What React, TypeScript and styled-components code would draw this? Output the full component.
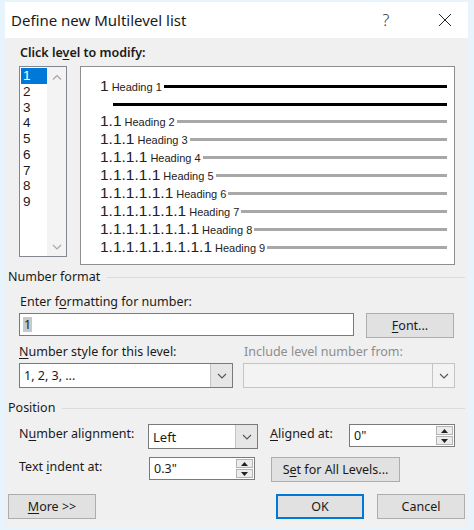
import React from "react";
import styled, { createGlobalStyle } from "styled-components";

const GlobalStyle = createGlobalStyle`
  html, body {
    margin: 0;
    padding: 0;
  }
  body {
    background: #e8f4fb;
    font-family: "Noto Sans", "Open Sans", sans-serif;
    color: #1a1a1a;
  }
`;

const Frame = styled.div`
  width: 474px;
  height: 530px;
  box-sizing: border-box;
  padding: 2px 6px 3px 5px;
  background: #e8f4fb;
  display: flex;
  flex-direction: column;
`;

const Window = styled.div`
  flex: 1;
  display: flex;
  flex-direction: column;
  background: #f0f0f0;
`;

const TitleBar = styled.div`
  height: 36px;
  background: #fff;
  display: flex;
  align-items: center;
  padding-left: 6px;
  font-size: 15px;
`;

const Title = styled.span`
  flex: 1;
`;

const HelpMark = styled.span`
  width: 20px;
  text-align: center;
  font-size: 16px;
  font-weight: 300;
  color: #333;
  margin-right: 38px;
`;

const CloseBox = styled.span`
  width: 22px;
  display: flex;
  justify-content: center;
  margin-right: 12px;
`;

const Body = styled.div`
  flex: 1;
  padding: 0 13px 0 3px;
  font-size: 12.5px;
`;

const Label = styled.div<{ $top: number; $disabled?: boolean; $bold?: boolean }>`
  margin-top: ${(p) => p.$top}px;
  padding-left: 12px;
  line-height: 16px;
  height: 16px;
  white-space: nowrap;
  font-weight: ${(p) => (p.$bold ? 600 : 400)};
  color: ${(p) => (p.$disabled ? "#8d8d8d" : "#1a1a1a")};
`;

const Key = styled.span`
  text-decoration: underline;
  text-underline-offset: 2px;
`;

const LevelRow = styled.div`
  margin-top: 5px;
  padding-left: 11px;
  display: flex;
  align-items: flex-start;
  gap: 13px;
`;

const ListBox = styled.div`
  width: 48px;
  height: 191px;
  box-sizing: border-box;
  border: 1px solid #828790;
  background: #fff;
  display: flex;
`;

const ListItems = styled.div`
  width: 26px;
  padding: 1px 0 0 1px;
  display: flex;
  flex-direction: column;
`;

const ListItem = styled.div<{ $selected?: boolean }>`
  height: 15.75px;
  line-height: 15.75px;
  font-family: "Liberation Sans", Arial, sans-serif;
  font-size: 13.5px;
  padding-left: 2px;
  color: ${(p) => (p.$selected ? "#fff" : "#1a1a1a")};
  background: ${(p) => (p.$selected ? "#0078d7" : "transparent")};
`;

const ScrollTrack = styled.div`
  flex: 1;
  background: #f3f3f3;
  display: flex;
  flex-direction: column;
  justify-content: space-between;
  align-items: center;
  padding: 7px 0 6px;
`;

const Preview = styled.div`
  width: 375px;
  height: 199px;
  box-sizing: border-box;
  border: 1px solid #8e8e8e;
  background: #fff;
  padding: 10px 7px 0 19px;
  font-family: "Liberation Sans", Arial, sans-serif;
`;

const PreviewRow = styled.div`
  height: 18px;
  display: flex;
  align-items: center;
  white-space: nowrap;
`;

const ContinueRow = styled.div`
  height: 17px;
  display: flex;
  align-items: center;
  padding-left: 13px;
`;

const Num = styled.span`
  font-size: 15.5px;
  line-height: 18px;
  color: #222;
  margin-right: 3px;
`;

const Heading = styled.span`
  font-size: 11px;
  color: #222;
  margin-right: 2px;
  padding-top: 2px;
`;

const Rule = styled.span<{ $dark?: boolean }>`
  flex: 1;
  height: 3px;
  margin-top: 1px;
  background: ${(p) => (p.$dark ? "#000" : "#a8a8a8")};
`;

const GroupHeader = styled.div<{ $top: number }>`
  margin-top: ${(p) => p.$top}px;
  margin-right: -10px;
  height: 16px;
  line-height: 16px;
  display: flex;
  align-items: center;
  gap: 7px;
  white-space: nowrap;

  &::after {
    content: "";
    flex: 1;
    height: 1px;
    background: #dcdcdc;
  }
`;

const FieldRow = styled.div<{ $top: number; $gap?: number }>`
  margin-top: ${(p) => p.$top}px;
  padding-left: 11px;
  display: flex;
  align-items: flex-start;
  gap: ${(p) => p.$gap ?? 12}px;
`;

const TwoCols = styled.div<{ $top: number }>`
  margin-top: ${(p) => p.$top}px;
  display: grid;
  grid-template-columns: 235px 212px;
  & > div {
    padding-left: 11px;
  }
  & > div + div {
    padding-left: 0;
  }
`;

const TextBox = styled.div<{ $width: number; $height?: number }>`
  width: ${(p) => p.$width}px;
  height: ${(p) => p.$height ?? 23}px;
  box-sizing: border-box;
  border: 1px solid #7a7a7a;
  background: #fff;
  display: flex;
  align-items: center;
  padding-left: 3px;
  font-size: 12.5px;
`;

const Caret = styled.span`
  background: #c8c8c8;
  padding: 0 1px;
  line-height: 15px;
`;

const Button = styled.div<{ $width: number; $primary?: boolean }>`
  width: ${(p) => p.$width}px;
  height: 25px;
  box-sizing: border-box;
  border: 1px solid ${(p) => (p.$primary ? "#0078d7" : "#adadad")};
  box-shadow: ${(p) => (p.$primary ? "inset 0 0 0 1px #0078d7" : "none")};
  background: #e1e1e1;
  display: flex;
  align-items: center;
  justify-content: center;
  font-size: 12.5px;
  white-space: nowrap;
`;

const Select = styled.div<{ $width: number; $disabled?: boolean; $font?: number }>`
  width: ${(p) => p.$width}px;
  height: 25px;
  box-sizing: border-box;
  border: 1px solid ${(p) => (p.$disabled ? "#c4c4c4" : "#7a7a7a")};
  background: ${(p) => (p.$disabled ? "#f3f3f3" : "#fff")};
  display: flex;
  align-items: stretch;
  font-size: ${(p) => p.$font ?? 12.5}px;
`;

const SelectValue = styled.span`
  flex: 1;
  display: flex;
  align-items: center;
  padding-left: 4px;
`;

const ArrowBox = styled.span<{ $disabled?: boolean }>`
  width: 21px;
  display: flex;
  align-items: center;
  justify-content: center;
  border-left: 1px solid #c4c4c4;
  background: ${(p) => (p.$disabled ? "#f3f3f3" : "#e6e6e6")};
`;

const SpinBox = styled.div`
  width: 106px;
  height: 23px;
  box-sizing: border-box;
  border: 1px solid #7a7a7a;
  background: #fff;
  display: flex;
  font-size: 12.5px;
`;

const SpinButtons = styled.div`
  width: 17px;
  display: flex;
  flex-direction: column;
  gap: 1px;
  padding: 1px 1px 1px 0;
`;

const SpinHalf = styled.span`
  flex: 1;
  border: 1px solid #b4b4b4;
  background: #ececec;
  display: flex;
  align-items: center;
  justify-content: center;
`;

const PosLabel = styled.div<{ $width: number }>`
  width: ${(p) => p.$width}px;
  line-height: 16px;
  padding-top: 2px;
  white-space: nowrap;
`;

const ButtonBar = styled.div`
  margin-top: 12px;
  margin-right: -10px;
  display: flex;
  gap: 13px;
`;

const Spacer = styled.div`
  flex: 1;
`;

const Chevron: React.FC<{ up?: boolean; color?: string }> = ({ up, color = "#555" }) => (
  <svg width="10" height="6" viewBox="0 0 10 6">
    <path
      d={up ? "M1 5.5 L5 1.5 L9 5.5" : "M1 1 L5 5 L9 1"}
      fill="none"
      stroke={color}
      strokeWidth="1.1"
    />
  </svg>
);

const Tri: React.FC<{ up?: boolean }> = ({ up }) => (
  <svg width="7" height="4" viewBox="0 0 7 4">
    <path d={up ? "M0 4 L3.5 0 L7 4 Z" : "M0 0 L3.5 4 L7 0 Z"} fill="#222" />
  </svg>
);

const Spin: React.FC<{ value: string }> = ({ value }) => (
  <SpinBox>
    <SelectValue>{value}</SelectValue>
    <SpinButtons>
      <SpinHalf>
        <Tri up />
      </SpinHalf>
      <SpinHalf>
        <Tri />
      </SpinHalf>
    </SpinButtons>
  </SpinBox>
);

const levels = [2, 3, 4, 5, 6, 7, 8, 9];

const App: React.FC = () => {
  return (
    <>
      <GlobalStyle />
      <Frame>
        <Window>
          <TitleBar>
            <Title>Define new Multilevel list</Title>
            <HelpMark>?</HelpMark>
            <CloseBox>
              <svg width="14" height="14" viewBox="0 0 14 14">
                <path d="M1 1 L13 13 M13 1 L1 13" stroke="#222" strokeWidth="1" />
              </svg>
            </CloseBox>
          </TitleBar>
          <Body>
            <Label $top={7} $bold>
              Click le<Key>v</Key>el to modify:
            </Label>
            <LevelRow>
              <ListBox>
                <ListItems>
                  {[1, 2, 3, 4, 5, 6, 7, 8, 9].map((n) => (
                    <ListItem key={n} $selected={n === 1}>
                      {n}
                    </ListItem>
                  ))}
                </ListItems>
                <ScrollTrack>
                  <Chevron up color="#a6a6a6" />
                  <Chevron color="#a6a6a6" />
                </ScrollTrack>
              </ListBox>
              <Preview>
                <PreviewRow>
                  <Num>1</Num>
                  <Heading>Heading 1</Heading>
                  <Rule $dark />
                </PreviewRow>
                <ContinueRow>
                  <Rule $dark />
                </ContinueRow>
                {levels.map((lvl) => (
                  <PreviewRow key={lvl}>
                    <Num>{Array(lvl).fill("1").join(".")}</Num>
                    <Heading>Heading {lvl}</Heading>
                    <Rule />
                  </PreviewRow>
                ))}
              </Preview>
            </LevelRow>

            <GroupHeader $top={4}>Number format</GroupHeader>
            <Label $top={9}>
              Enter f<Key>o</Key>rmatting for number:
            </Label>
            <FieldRow $top={3}>
              <TextBox $width={335}>
                <Caret>1</Caret>
              </TextBox>
              <Button $width={88}>
                <Key>F</Key>ont...
              </Button>
            </FieldRow>
            <TwoCols $top={6}>
              <Label $top={0}>
                <Key>N</Key>umber style for this level:
              </Label>
              <Label $top={0} $disabled style={{ paddingLeft: 1 }}>
                Include level number from:
              </Label>
            </TwoCols>
            <TwoCols $top={3}>
              <div>
                <Select $width={214}>
                  <SelectValue>1, 2, 3, ...</SelectValue>
                  <ArrowBox>
                    <Chevron />
                  </ArrowBox>
                </Select>
              </div>
              <div>
                <Select $width={212} $disabled>
                  <SelectValue />
                  <ArrowBox $disabled>
                    <Chevron />
                  </ArrowBox>
                </Select>
              </div>
            </TwoCols>

            <GroupHeader $top={12}>Position</GroupHeader>
            <FieldRow $top={8} $gap={0}>
              <PosLabel $width={129}>
                N<Key>u</Key>mber alignment:
              </PosLabel>
              <Select $width={110} $font={13}>
                <SelectValue>Left</SelectValue>
                <ArrowBox>
                  <Chevron />
                </ArrowBox>
              </Select>
              <PosLabel $width={79} style={{ marginLeft: 12 }}>
                <Key>A</Key>ligned at:
              </PosLabel>
              <Spin value={'0"'} />
            </FieldRow>
            <FieldRow $top={8} $gap={0}>
              <PosLabel $width={130}>
                Text <Key>i</Key>ndent at:
              </PosLabel>
              <Spin value={'0.3"'} />
              <Button $width={129} style={{ marginLeft: 16 }}>
                S<Key>e</Key>t for All Levels...
              </Button>
            </FieldRow>

            <ButtonBar>
              <Button $width={88}>
                <Key>M</Key>ore &gt;&gt;
              </Button>
              <Spacer />
              <Button $width={88} $primary>
                OK
              </Button>
              <Button $width={88}>Cancel</Button>
            </ButtonBar>
          </Body>
        </Window>
      </Frame>
    </>
  );
};

export default App;
